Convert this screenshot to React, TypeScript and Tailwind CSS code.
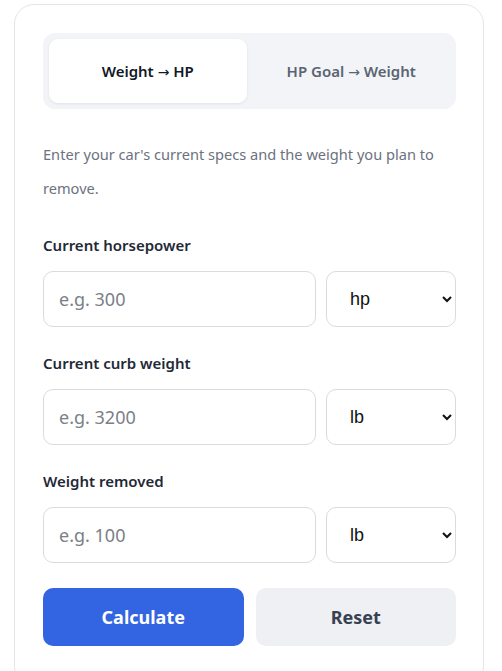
import { useState } from 'react';

const font = { fontFamily: '"Noto Sans", "Open Sans", sans-serif' };
const arrowFont = { fontFamily: '"DejaVu Sans", sans-serif' };

type FieldProps = {
  label: string;
  placeholder: string;
  units: string[];
};

function Field({ label, placeholder, units }: FieldProps) {
  return (
    <div className="flex flex-col">
      <label className="mb-[16px] text-[15px] font-semibold leading-[20px] text-[#1f2937]">{label}</label>
      <div className="flex gap-[10px]">
        <input
          type="text"
          placeholder={placeholder}
          className="h-[56px] min-w-0 flex-1 rounded-[10px] border border-[#d8dbe1] bg-white px-[15px] text-[18px] text-[#111827] placeholder:text-[#7b7f86] outline-none"
        />
        <select
          defaultValue={units[0]}
          className="h-[56px] w-[130px] rounded-[10px] border border-[#d8dbe1] bg-white pl-[19px] pr-[8px] text-[18px] text-[#111]"
          style={{ fontFamily: '"Liberation Sans", Arial, sans-serif' }}
        >
          {units.map((u) => (
            <option key={u} value={u}>
              {u}
            </option>
          ))}
        </select>
      </div>
    </div>
  );
}

export default function App() {
  const [mode, setMode] = useState<'w2hp' | 'hp2w'>('w2hp');

  const tab = (key: 'w2hp' | 'hp2w', a: string, b: string) => (
    <button
      type="button"
      onClick={() => setMode(key)}
      className={`h-[64px] flex-1 rounded-[9px] text-[15px] font-semibold ${
        mode === key ? 'bg-white text-[#111827] shadow-[0_1px_3px_rgba(0,0,0,0.08)]' : 'text-[#5b6472]'
      }`}
    >
      {a}{' '}
      <span className="text-[14px] font-normal" style={arrowFont}>
        →
      </span>{' '}
      {b}
    </button>
  );

  return (
    <div className="min-h-screen bg-white pl-[14px] pt-[4px]" style={font}>
      <div className="w-[470px] rounded-[20px] border border-[#e3e5ea] bg-white pl-[28px] pr-[27px] pt-[28px] pb-[40px]">
        {/* tabs */}
        <div className="flex gap-[6px] rounded-[12px] bg-[#f3f4f7] p-[6px]">
          {tab('w2hp', 'Weight', 'HP')}
          {tab('hp2w', 'HP Goal', 'Weight')}
        </div>

        <p className="mt-[28px] text-[14.6px] leading-[34px] text-[#6b7280]">
          Enter your car's current specs and the weight you plan to remove.
        </p>

        <div className="mt-[30px] flex flex-col gap-[26px]">
          <Field label="Current horsepower" placeholder="e.g. 300" units={['hp', 'kW', 'PS']} />
          <Field label="Current curb weight" placeholder="e.g. 3200" units={['lb', 'kg']} />
          <Field label="Weight removed" placeholder="e.g. 100" units={['lb', 'kg']} />
        </div>

        <div className="mt-[25px] flex gap-[12px]">
          <button
            type="button"
            className="h-[58px] flex-1 rounded-[10px] bg-[#3365e3] text-[18px] font-bold text-white"
          >
            Calculate
          </button>
          <button
            type="button"
            className="h-[58px] flex-1 rounded-[10px] bg-[#eef0f4] text-[18px] font-bold text-[#374151]"
          >
            Reset
          </button>
        </div>
      </div>
    </div>
  );
}
